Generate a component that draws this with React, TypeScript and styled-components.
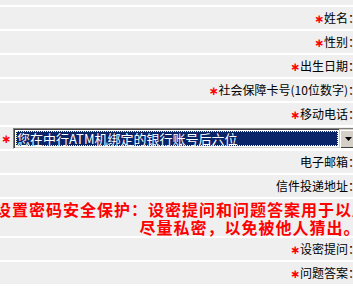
import React from "react";
import styled, { createGlobalStyle } from "styled-components";

const Global = createGlobalStyle`
  html, body { margin: 0; padding: 0; background: #ffffff; }
  body { font-family: "Noto Sans CJK SC", "Liberation Sans", sans-serif; }
`;

const Viewport = styled.div`
  width: 353px;
  height: 304px;
  overflow: hidden;
  background: #ffffff;
`;

const Table = styled.div`
  width: 508px;
  margin-top: -17px;
  display: flex;
  flex-direction: column;
  gap: 2px;
`;

const Row = styled.div<{ $h?: number }>`
  display: grid;
  grid-template-columns: 360px 148px;
  height: ${(p) => p.$h ?? 22}px;
  background: #efefef;
`;

const LabelCell = styled.div`
  display: flex;
  align-items: center;
  justify-content: flex-end;
  font-size: 12px;
  line-height: 14px;
  color: #000000;
  white-space: nowrap;
`;

const Star = styled.span`
  color: #ff0000;
  font-family: "DejaVu Sans", sans-serif;
  font-weight: bold;
  font-size: 12px;
  line-height: 14px;
  transform: translateY(1px);
`;

const ValueCell = styled.div``;

const SelectRow = styled.div`
  display: flex;
  align-items: center;
  height: 22px;
  background: #efefef;
  padding-left: 1px;
`;

const SelectStar = styled(Star)`
  width: 12px;
  flex: none;
`;

const SelectBox = styled.div`
  box-sizing: border-box;
  flex: none;
  width: 344px;
  height: 21px;
  display: flex;
  border-top: 1px solid #808080;
  border-left: 1px solid #808080;
  border-right: 1px solid #ffffff;
  border-bottom: 1px solid #ffffff;
  box-shadow: inset 1px 1px 0 #404040, inset -1px -1px 0 #d4d0c8;
  padding: 2px;
  background: #ffffff;
  margin-top: 1px;
`;

const SelectValue = styled.div`
  flex: 1;
  background: #0a246a;
  color: #ffffff;
  font-size: 13px;
  line-height: 15px;
  padding-left: 1px;
  outline: 1px dotted #ffffc0;
  outline-offset: -1px;
  white-space: nowrap;
  overflow: hidden;
  display: flex;
  align-items: center;
`;

const DropButton = styled.div`
  width: 16px;
  flex: none;
  margin: -2px -2px -2px 1px;
  background: #d4d0c8;
  border-top: 1px solid #d4d0c8;
  border-left: 1px solid #d4d0c8;
  box-shadow: inset 1px 1px 0 #ffffff, inset -1px -1px 0 #404040;
  display: flex;
  align-items: center;
  justify-content: center;
`;

const NoticeRow = styled.div`
  height: 37px;
  background: #efefef;
  color: #ff0000;
  font-size: 16px;
  font-weight: bold;
  line-height: 18px;
  letter-spacing: 1px;
  white-space: nowrap;
  display: flex;
  flex-direction: column;
  align-items: center;
  justify-content: center;
`;

const NoticeLine = styled.div<{ $shift?: number }>`
  flex: none;
  padding-right: ${(p) => p.$shift ?? 0}px;
`;

const labels: { text: string; star: boolean }[] = [
  { text: "", star: false },
  { text: "姓名：", star: true },
  { text: "性别：", star: true },
  { text: "出生日期：", star: true },
  { text: "社会保障卡号(10位数字)：", star: true },
  { text: "移动电话：", star: true },
];

const labels2 = [
  { text: "电子邮箱：", star: false },
  { text: "信件投递地址：", star: false },
];

const labels3 = [
  { text: "设密提问：", star: true },
  { text: "问题答案：", star: true },
];

const FieldRow = ({ text, star }: { text: string; star: boolean }) => (
  <Row>
    <LabelCell>
      {star && <Star>∗</Star>}
      {text}
    </LabelCell>
    <ValueCell />
  </Row>
);

export default function App() {
  return (
    <Viewport>
      <Global />
      <Table>
        {labels.map((l, i) => (
          <FieldRow key={i} {...l} />
        ))}
        <SelectRow>
          <SelectStar>∗</SelectStar>
          <SelectBox>
            <SelectValue>您在中行ATM机绑定的银行账号后六位</SelectValue>
            <DropButton>
              <svg width="7" height="4" viewBox="0 0 7 4">
                <path d="M0 0H7L3.5 4Z" fill="#000" />
              </svg>
            </DropButton>
          </SelectBox>
        </SelectRow>
        {labels2.map((l, i) => (
          <FieldRow key={i} {...l} />
        ))}
        <NoticeRow>
          <NoticeLine $shift={8}>设置密码安全保护：设密提问和问题答案用于以后找回登录密码，请</NoticeLine>
          <NoticeLine $shift={8}>尽量私密，以免被他人猜出。</NoticeLine>
        </NoticeRow>
        {labels3.map((l, i) => (
          <FieldRow key={i} {...l} />
        ))}
      </Table>
    </Viewport>
  );
}
